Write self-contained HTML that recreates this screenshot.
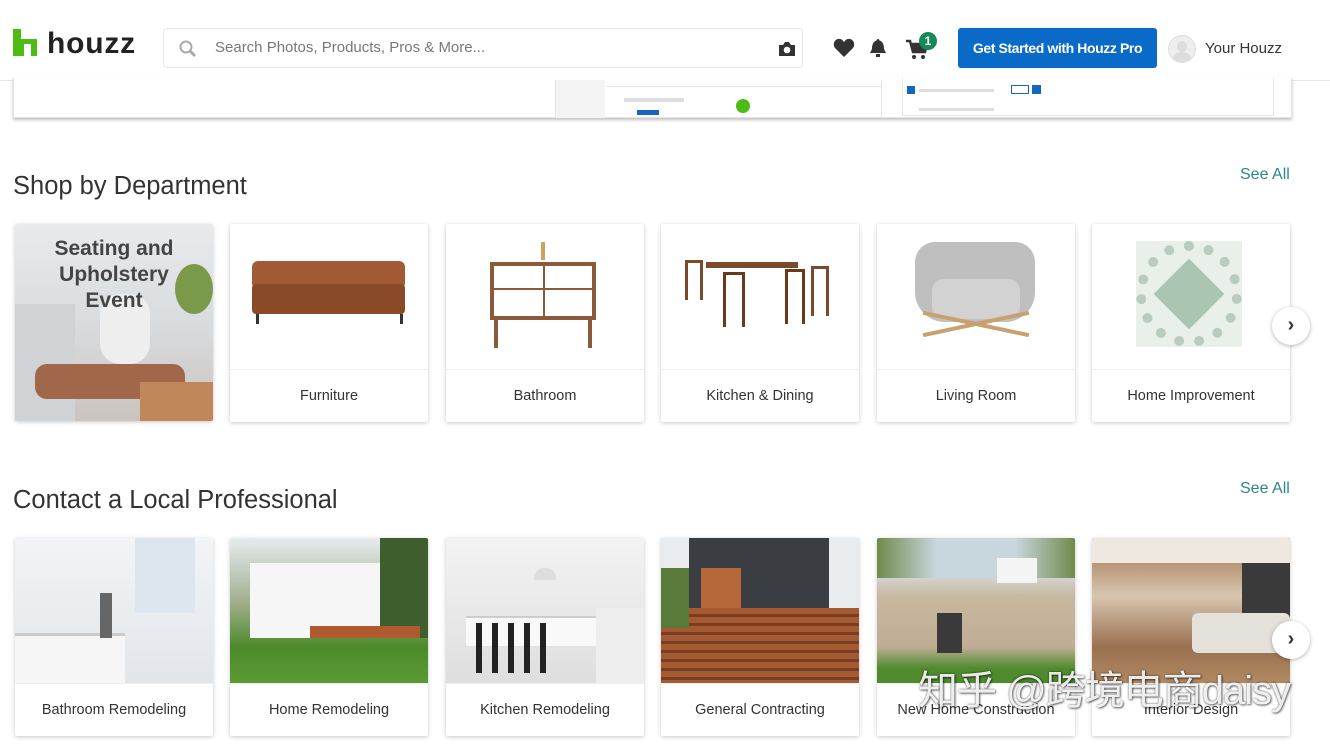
<!DOCTYPE html>
<html><head><meta charset="utf-8"><style>
*{margin:0;padding:0;box-sizing:border-box}
body{width:1330px;height:744px;overflow:hidden;background:#fff;font-family:"Liberation Sans","Noto Sans CJK SC",sans-serif;color:#222;position:relative}
.hdr{position:absolute;left:0;top:0;width:1330px;height:81px;border-bottom:1px solid #e6e6e6;background:#fff}
.abs{position:absolute}
.search{left:163px;top:28px;width:640px;height:40px;border:1px solid #e8e8e8;border-radius:4px}
.btn{left:958px;top:28px;width:199px;height:40px;background:#0a6ac8;border-radius:3px;color:#fff;font-weight:bold;font-size:14px;line-height:40px;text-align:center;letter-spacing:-0.4px}
.banner{left:13px;top:78px;width:1279px;height:40px;background:#fff;box-shadow:0 2px 3px rgba(0,0,0,.25);border:1px solid #e4e4e4;border-top:none}
h2{position:absolute;font-weight:normal;font-size:25.5px;color:#333;left:13px}
.see{position:absolute;left:1240px;color:#2a8a80;font-size:16px}
.card{position:absolute;width:198px;height:198px;background:#fff;box-shadow:0 1px 4px rgba(0,0,0,.22);border-radius:2px;overflow:hidden}
.card .img{position:absolute;left:0;top:0;width:198px;height:145px;overflow:hidden}
.card .lbl{position:absolute;left:0;top:145px;width:198px;height:53px;border-top:1px solid #eee;text-align:center;line-height:53px;font-size:14.5px;color:#333}
.arrow{position:absolute;width:38px;height:38px;border-radius:50%;background:#fff;box-shadow:0 1px 4px rgba(0,0,0,.3);left:1272px;font-size:20px;text-align:center;line-height:36px;font-weight:bold;color:#333}
</style></head><body>
<div class="hdr">
 <div class="abs" style="left:13px;top:29px;width:8px;height:27px;background:#4dbc15"></div>
 <div class="abs" style="left:21px;top:39px;width:16px;height:17px;background:#4dbc15"></div>
 <div class="abs" style="left:24px;top:44px;width:7px;height:12px;background:#fff"></div>
 <div class="abs" style="left:47px;top:27px;font-size:30px;font-weight:bold;letter-spacing:0.8px;color:#222">houzz</div>
 <div class="abs search">
  <svg class="abs" style="left:14px;top:10px" width="20" height="20" viewBox="0 0 20 20"><circle cx="8" cy="8" r="5.5" fill="none" stroke="#aaa" stroke-width="2"/><path d="M12 12l5 5" stroke="#aaa" stroke-width="3"/></svg>
  <div class="abs" style="left:51px;top:10px;font-size:15px;color:#777">Search Photos, Products, Pros &amp; More...</div>
  <svg class="abs" style="left:613px;top:11px" width="20" height="18" viewBox="0 0 20 18"><path d="M2 5h4l2-3h4l2 3h4v11H2z" fill="#333"/><circle cx="10" cy="10" r="3.3" fill="#fff"/></svg>
 </div>
 <svg class="abs" style="left:833px;top:38px" width="22" height="20" viewBox="0 0 22 20"><path d="M11 19L2 10C-1 6 2 0 7 1c2 0 3 2 4 3 1-1 2-3 4-3 5-1 8 5 5 9z" fill="#333"/></svg>
 <svg class="abs" style="left:867px;top:37px" width="22" height="22" viewBox="0 0 22 22"><path d="M11 2c1 0 1.5 1 1.5 1.5C16 4.5 17 8 17 12l2 4H3l2-4c0-4 1-7.5 4.5-8.5C9.5 3 10 2 11 2z" fill="#333"/><rect x="9" y="17" width="4" height="3" fill="#333"/></svg>
 <svg class="abs" style="left:905px;top:38px" width="24" height="24" viewBox="0 0 24 24"><path d="M1 3h4l3 11h12l2-8H7" fill="none" stroke="#333" stroke-width="2.5"/><path d="M7 6h15l-2 8H8z" fill="#333"/><circle cx="9" cy="19" r="2" fill="#333"/><circle cx="18" cy="19" r="2" fill="#333"/></svg>
 <div class="abs" style="left:919px;top:32px;width:18px;height:18px;border-radius:50%;background:#138a5a;color:#fff;font-size:12px;font-weight:bold;text-align:center;line-height:18px">1</div>
 <div class="abs btn">Get Started with Houzz Pro</div>
 <div class="abs" style="left:1168px;top:35px;width:28px;height:28px;border-radius:50%;background:#eee;border:1px solid #ddd;overflow:hidden"><div class="abs" style="left:8px;top:5px;width:10px;height:11px;border-radius:50%;background:#ddd"></div><div class="abs" style="left:4px;top:16px;width:18px;height:14px;border-radius:50%;background:#ddd"></div></div>
 <div class="abs" style="left:1205px;top:40px;font-size:15px;color:#333">Your Houzz</div>
</div>
<div class="abs banner">
 <div class="abs" style="left:541px;top:2px;width:50px;height:38px;background:#f4f4f4;border-left:1px solid #e6e6e6"></div>
 <div class="abs" style="left:592px;top:8px;width:275px;height:1px;background:#e4e4e4"></div>
 <div class="abs" style="left:610px;top:20px;width:60px;height:4px;background:#ddd"></div>
 <div class="abs" style="left:623px;top:32px;width:22px;height:5px;background:#1566c0"></div>
 <div class="abs" style="left:722px;top:21px;width:14px;height:14px;border-radius:50%;background:#4dbc15"></div>
 <div class="abs" style="left:867px;top:2px;width:1px;height:38px;background:#e6e6e6"></div>
 <div class="abs" style="left:888px;top:0;width:372px;height:38px;border:1px solid #e6e6e6;border-top:none"></div>
 <div class="abs" style="left:893px;top:8px;width:8px;height:8px;background:#1566c0"></div>
 <div class="abs" style="left:905px;top:11px;width:75px;height:3px;background:#ddd"></div>
 <div class="abs" style="left:997px;top:7px;width:18px;height:9px;border:1px solid #1566c0"></div>
 <div class="abs" style="left:1018px;top:7px;width:9px;height:9px;background:#1566c0"></div>
 <div class="abs" style="left:905px;top:30px;width:75px;height:3px;background:#ddd"></div>
</div>
<h2 style="top:172px">Shop by Department</h2>
<div class="see" style="top:166px">See All</div>

<div class="card" style="left:15px;top:224px;height:197px">
 <div class="abs" style="inset:0;background:linear-gradient(180deg,#e8eaec 0%,#d9dcdf 50%,#c9c4bf 100%)"></div>
 <div class="abs" style="left:0;top:80px;width:60px;height:117px;background:#cfd3d6"></div>
 <div class="abs" style="left:20px;top:140px;width:150px;height:35px;background:#a0674a;border-radius:12px"></div>
 <div class="abs" style="left:85px;top:70px;width:50px;height:70px;background:#eee;border-radius:20px"></div>
 <div class="abs" style="left:125px;top:158px;width:73px;height:39px;background:#c0885a"></div>
 <div class="abs" style="left:160px;top:40px;width:38px;height:50px;background:#7a9a4a;border-radius:50%"></div>
 <div class="abs" style="left:0;top:12px;width:198px;text-align:center;font-size:21px;font-weight:bold;color:#444;line-height:26px">Seating and<br>Upholstery<br>Event</div>
</div>
<div class="card" style="left:230px;top:224px"><div class="img">
 <div class="abs" style="left:22px;top:37px;width:153px;height:28px;background:#a25a34;border-radius:6px"></div>
 <div class="abs" style="left:22px;top:60px;width:153px;height:30px;background:#8a4a28;border-radius:4px"></div>
 <div class="abs" style="left:26px;top:90px;width:3px;height:10px;background:#333"></div><div class="abs" style="left:170px;top:90px;width:3px;height:10px;background:#333"></div>
</div><div class="lbl">Furniture</div></div>
<div class="card" style="left:446px;top:224px"><div class="img">
 <div class="abs" style="left:44px;top:38px;width:106px;height:58px;background:#fff;border:4px solid #8a5a3a"></div>
 <div class="abs" style="left:48px;top:64px;width:98px;height:2px;background:#8a5a3a"></div>
 <div class="abs" style="left:97px;top:42px;width:2px;height:52px;background:#8a5a3a"></div>
 <div class="abs" style="left:48px;top:96px;width:4px;height:28px;background:#8a5a3a"></div><div class="abs" style="left:142px;top:96px;width:4px;height:28px;background:#8a5a3a"></div>
 <div class="abs" style="left:95px;top:18px;width:4px;height:18px;background:#c9a45a"></div>
</div><div class="lbl">Bathroom</div></div>
<div class="card" style="left:661px;top:224px"><div class="img">
 <div class="abs" style="left:45px;top:38px;width:92px;height:6px;background:#7a4a2a"></div>
 <div class="abs" style="left:24px;top:36px;width:18px;height:40px;border:3px solid #7a4a2a;border-bottom:none"></div>
 <div class="abs" style="left:62px;top:48px;width:22px;height:55px;border:3px solid #6a3a1a;border-bottom:none"></div>
 <div class="abs" style="left:124px;top:45px;width:20px;height:55px;border:3px solid #6a3a1a;border-bottom:none"></div>
 <div class="abs" style="left:150px;top:42px;width:18px;height:50px;border:3px solid #7a4a2a;border-bottom:none"></div>
</div><div class="lbl">Kitchen &amp; Dining</div></div>
<div class="card" style="left:877px;top:224px"><div class="img">
 <div class="abs" style="left:38px;top:18px;width:120px;height:80px;background:#bfbfbf;border-radius:20px 20px 30px 30px"></div>
 <div class="abs" style="left:55px;top:55px;width:88px;height:40px;background:#d2d2d2;border-radius:12px"></div>
 <div class="abs" style="left:45px;top:98px;width:108px;height:4px;background:#c9a070;transform:rotate(12deg)"></div>
 <div class="abs" style="left:45px;top:98px;width:108px;height:4px;background:#c9a070;transform:rotate(-12deg)"></div>
</div><div class="lbl">Living Room</div></div>
<div class="card" style="left:1092px;top:224px"><div class="img">
 <div class="abs" style="left:44px;top:17px;width:106px;height:106px;background:#e9efe9"></div>
 <div class="abs" style="left:72px;top:45px;width:50px;height:50px;background:#8fb59a;transform:rotate(45deg);opacity:.7"></div>
 <div class="abs" style="left:44px;top:17px;width:106px;height:106px;border:10px dotted #9ab5a0;border-radius:50%;opacity:.6"></div>
</div><div class="lbl">Home Improvement</div></div>
<div class="arrow" style="top:307px">›</div>

<h2 style="top:486px">Contact a Local Professional</h2>
<div class="see" style="top:480px">See All</div>

<div class="card" style="left:15px;top:538px"><div class="img" style="background:linear-gradient(180deg,#f2f4f6,#e2e6ea)">
 <div class="abs" style="left:0;top:95px;width:110px;height:50px;background:#f6f6f6;border-top:3px solid #ccc"></div>
 <div class="abs" style="left:120px;top:0;width:60px;height:75px;background:#dde6ee"></div>
 <div class="abs" style="left:85px;top:55px;width:12px;height:45px;background:#666"></div>
</div><div class="lbl">Bathroom Remodeling</div></div>
<div class="card" style="left:230px;top:538px"><div class="img" style="background:linear-gradient(180deg,#e6ecef 0%,#9fae8a 45%,#4c8a2a 75%,#5a9a32 100%)">
 <div class="abs" style="left:20px;top:25px;width:140px;height:75px;background:#f6f6f6"></div>
 <div class="abs" style="left:150px;top:0;width:48px;height:100px;background:#3e5e2e"></div>
 <div class="abs" style="left:80px;top:88px;width:110px;height:12px;background:#b05a30"></div>
</div><div class="lbl">Home Remodeling</div></div>
<div class="card" style="left:446px;top:538px"><div class="img" style="background:linear-gradient(180deg,#f3f3f3,#dedede)">
 <div class="abs" style="left:20px;top:78px;width:130px;height:30px;background:#f9f9f9;border-top:2px solid #ccc"></div>
 <div class="abs" style="left:30px;top:85px;width:70px;height:50px;background:repeating-linear-gradient(90deg,#222 0 6px,transparent 6px 16px)"></div>
 <div class="abs" style="left:150px;top:70px;width:48px;height:75px;background:#eee"></div>
 <div class="abs" style="left:88px;top:30px;width:22px;height:12px;background:#ddd;border-radius:10px 10px 0 0"></div>
</div><div class="lbl">Kitchen Remodeling</div></div>
<div class="card" style="left:661px;top:538px"><div class="img" style="background:#e8ecef">
 <div class="abs" style="left:28px;top:0;width:140px;height:100px;background:#3a3d42"></div>
 <div class="abs" style="left:40px;top:30px;width:40px;height:75px;background:#b6683a"></div>
 <div class="abs" style="left:0;top:70px;width:198px;height:75px;background:repeating-linear-gradient(180deg,#a65a32 0 6px,#7a3e22 6px 9px)"></div>
 <div class="abs" style="left:0;top:30px;width:28px;height:60px;background:#5a7a3a"></div>
</div><div class="lbl">General Contracting</div></div>
<div class="card" style="left:877px;top:538px"><div class="img" style="background:linear-gradient(180deg,#d9e3ea 0%,#d9e3ea 20%,#c8b8a0 40%,#bfae95 75%,#4f8a2e 90%)">
 <div class="abs" style="left:0;top:0;width:198px;height:40px;background:linear-gradient(90deg,#6f8a4a,#c8d6de 30%,#c8d6de 70%,#6f8a4a)"></div>
 <div class="abs" style="left:60px;top:75px;width:25px;height:40px;background:#3a3a3a"></div>
 <div class="abs" style="left:120px;top:20px;width:40px;height:25px;background:#f4f4f4"></div>
</div><div class="lbl">New Home Construction</div></div>
<div class="card" style="left:1092px;top:538px"><div class="img" style="background:linear-gradient(180deg,#a0704a 0%,#d8c6b0 40%,#9a7050 75%,#b08a62 100%)">
 <div class="abs" style="left:150px;top:0;width:48px;height:80px;background:#3a3a3a"></div>
 <div class="abs" style="left:100px;top:75px;width:98px;height:40px;background:#e4e0da;border-radius:6px"></div>
 <div class="abs" style="left:0;top:0;width:198px;height:25px;background:#eee8e0"></div>
</div><div class="lbl">Interior Design</div></div>
<div class="arrow" style="top:621px">›</div>

<div class="abs" style="left:918px;top:658px;font-size:40px;color:rgba(255,255,255,.9);text-shadow:0 0 2px rgba(0,0,0,.6),1px 1px 2px rgba(0,0,0,.5);white-space:nowrap;letter-spacing:-1px">知乎 @跨境电商daisy</div>
</body></html>
